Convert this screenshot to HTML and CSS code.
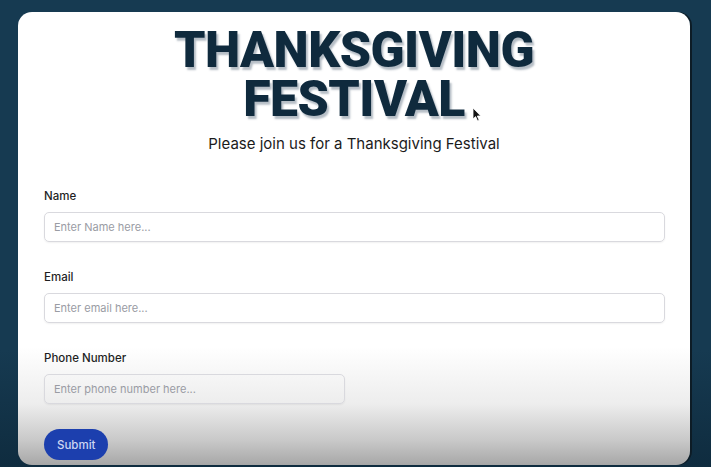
FILE: index.html
```html
<!DOCTYPE html>
<html lang="en">
<head>
<meta charset="utf-8">
<title>Thanksgiving Festival</title>
<link rel="stylesheet" href="styles.css">
</head>
<body>
<main class="card">
  <header class="hero">
    <h1 class="title">THANKSGIVING<br>FESTIVAL</h1>
    <p class="subtitle">Please join us for a Thanksgiving Festival</p>
  </header>
  <form class="form">
    <div class="field">
      <label class="label" for="name">Name</label>
      <input class="input" id="name" type="text" placeholder="Enter Name here...">
    </div>
    <div class="field">
      <label class="label" for="email">Email</label>
      <input class="input" id="email" type="email" placeholder="Enter email here...">
    </div>
    <div class="field">
      <label class="label" for="phone">Phone Number</label>
      <input class="input input-short" id="phone" type="tel" placeholder="Enter phone number here...">
    </div>
    <button class="submit" type="button">Submit</button>
  </form>
  <svg class="cursor" width="10" height="15" viewBox="0 0 10 15"><path d="M1 1 L1 12 L3.6 9.6 L5.6 14 L7.2 13.3 L5.3 9 L8.8 9 Z" fill="#111" stroke="#fff" stroke-width="0.8"/></svg>
</main>
</body>
</html>
```
FILE: styles.css
```css
html, body {
  margin: 0;
  height: 100%;
}
body {
  background: linear-gradient(to bottom, #163a51 0%, #163a51 75%, #0f2c3f 100%);
  font-family: Inter, "Noto Sans", sans-serif;
  overflow: hidden;
}
.card {
  position: relative;
  box-sizing: border-box;
  margin: 12px 21px 0 18px;
  height: 453px;
  border-radius: 14px;
  background: linear-gradient(to bottom, #ffffff 0px, #ffffff 335px, #ededed 392px, #c9c9c9 428px, #a7a7a7 453px);
  box-shadow: 2px 0 0 #0d1c26;
  padding: 14px 26px 0 26px;
}
.hero {
  text-align: center;
}
.title {
  margin: 0;
  font-family: Roboto, sans-serif;
  font-weight: 900;
  font-size: 50px;
  line-height: 49px;
  letter-spacing: -0.5px;
  color: #0f2a3d;
  text-shadow: 2px 3px 2px rgba(70, 90, 110, 0.4);
}
.subtitle {
  margin: 10px 0 0;
  font-size: 15px;
  line-height: 19px;
  color: #1b1b1b;
}
.form {
  margin-top: 35px;
  display: flex;
  flex-direction: column;
  align-items: flex-start;
  gap: 27px;
}
.field {
  display: flex;
  flex-direction: column;
  gap: 8px;
  width: 100%;
}
.label {
  font-size: 11.5px;
  line-height: 16px;
  font-weight: 500;
  color: #1f1f1f;
}
.input {
  box-sizing: border-box;
  width: 621px;
  height: 30px;
  border: 1px solid #d9d9de;
  border-radius: 5px;
  background: transparent;
  padding: 0 9px;
  font-family: Inter, sans-serif;
  font-size: 11px;
  color: #333;
  box-shadow: 0 1px 2px rgba(0,0,0,0.06);
}
.input::placeholder {
  color: #9a9ca4;
}
.input-short {
  width: 301px;
}
.submit {
  margin-top: -2px;
  height: 31px;
  padding: 0 13px;
  border: none;
  border-radius: 16px;
  background: #1c3fae;
  color: #cdd6f2;
  font-family: Inter, sans-serif;
  font-size: 11.5px;
  font-weight: 500;
}
.cursor {
  position: absolute;
  left: 454px;
  top: 95px;
}
```
